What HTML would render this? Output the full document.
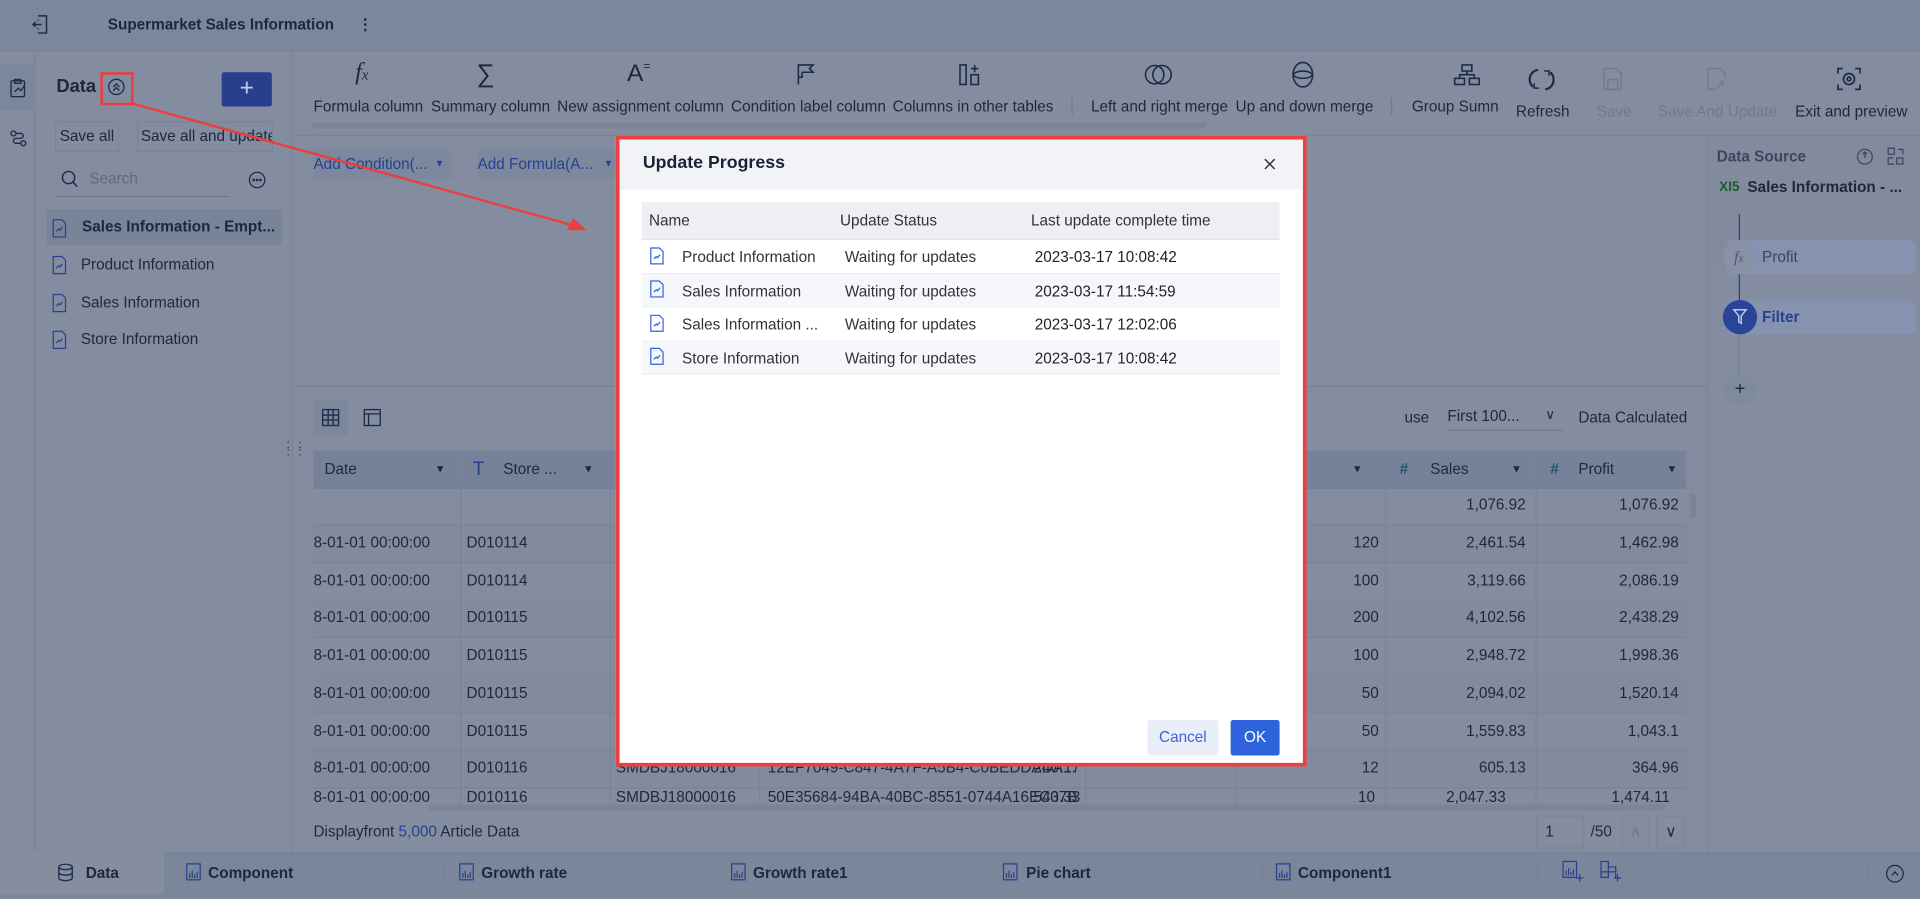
<!DOCTYPE html>
<html><head><meta charset="utf-8"><style>
*{margin:0;padding:0;box-sizing:border-box}
html,body{width:1920px;height:899px;overflow:hidden;background:#858e9f}
#w{position:absolute;left:0;top:0;width:1568px;height:734px;transform:scale(1.224490);transform-origin:0 0;font-family:"Liberation Sans",Arial,sans-serif;font-size:12.5px;color:#1d273d;background:#848d9f}
.a{position:absolute;white-space:nowrap}
svg{position:absolute;overflow:visible}
.dim{color:#6f7a90}
.tc{position:absolute;height:31px;line-height:31px;border-right:1px solid #7a8397}
.row{position:absolute;left:256px;width:1121px;height:31px;border-bottom:1px solid #7a8397}
</style></head><body><div id="w">
<!-- header -->
<div class="a" style="left:0;top:0;width:1568px;height:42px;background:#7c879b;border-bottom:1px solid #76809a"></div>
<svg style="left:26px;top:12px" width="14" height="16" viewBox="0 0 14 16" fill="none" stroke="#1d2a4a" stroke-width="1.2"><path d="M5 1h7v14H5M5 5v-1M5 12v-1M1 8h7M3 6l-2 2 2 2"/></svg>
<div class="a" style="left:88px;top:13px;font-weight:bold;font-size:12.5px">Supermarket Sales Information</div>
<div class="a" style="left:292px;top:12px;font-weight:bold">⋮</div>
<!-- left icon strip -->
<div class="a" style="left:0;top:42px;width:29px;height:654px;border-right:1px solid #7a8398"></div>
<div class="a" style="left:0;top:53px;width:29px;height:37px;background:#7d879b"></div>
<svg style="left:8px;top:64px" width="14" height="16" viewBox="0 0 14 16" fill="none" stroke="#1d2a4a" stroke-width="1.1"><rect x="1" y="2" width="11" height="13" rx="1"/><path d="M4 1h5v3H4zM4 11l3-3 2 2 3-4"/></svg>
<svg style="left:8px;top:106px" width="14" height="14" viewBox="0 0 14 14" fill="none" stroke="#1d2a4a" stroke-width="1.1"><circle cx="3" cy="3" r="2"/><circle cx="11" cy="11" r="2"/><path d="M5 3h4a2 2 0 010 4H5a2 2 0 000 4h4"/></svg>
<!-- left panel -->
<div class="a" style="left:238px;top:42px;width:1px;height:654px;background:#7a8398"></div>
<div class="a" style="left:46px;top:62px;font-weight:bold;font-size:15px">Data</div>
<svg style="left:88px;top:64px" width="14" height="14" viewBox="0 0 14 14" fill="none" stroke="#1d2a4a" stroke-width="1.1"><circle cx="7" cy="7" r="6.2"/><path d="M4.5 7l2.5-2.5L9.5 7M4.5 10l2.5-2.5L9.5 10"/></svg>
<div class="a" style="left:82px;top:59px;width:27px;height:27px;border:2px solid #ee3b3b"></div>
<div class="a" style="left:181px;top:59px;width:41px;height:28px;background:#273f8c;border-radius:2px;color:#c4cde4;font-size:20px;line-height:26px;text-align:center">+</div>
<div class="a" style="left:45px;top:99px;width:52px;height:25px;border:1px solid #7a8398;line-height:23px;text-align:center">Save all</div>
<div class="a" style="left:112px;top:99px;width:111px;height:25px;border:1px solid #7a8398;line-height:23px;overflow:hidden;padding-left:2px">Save all and update</div>
<svg style="left:50px;top:139px" width="14" height="15" viewBox="0 0 14 15" fill="none" stroke="#1d2a4a" stroke-width="1.2"><circle cx="6" cy="6" r="5"/><path d="M9.5 9.5l3.5 4"/></svg>
<div class="a" style="left:73px;top:139px;color:#5d6880">Search</div>
<div class="a" style="left:45px;top:160px;width:143px;height:1px;background:#6f7a90"></div>
<svg style="left:203px;top:140px" width="14" height="14" viewBox="0 0 14 14" fill="none" stroke="#1d2a4a" stroke-width="1"><circle cx="7" cy="7" r="6.3"/><circle cx="4.3" cy="7" r=".6" fill="#1d2a4a"/><circle cx="7" cy="7" r=".6" fill="#1d2a4a"/><circle cx="9.7" cy="7" r=".6" fill="#1d2a4a"/></svg>
<div class="a" style="left:38px;top:171px;width:192px;height:29px;background:#7a8499"></div>
<div class="a" style="left:67px;top:178px;font-weight:bold">Sales Information - Empt...</div>
<div class="a" style="left:66px;top:209px">Product Information</div>
<div class="a" style="left:66px;top:240px">Sales Information</div>
<div class="a" style="left:66px;top:270px">Store Information</div>
<svg style="left:0;top:0" width="1" height="1"><defs><g id="fi" fill="none" stroke="#26418f" stroke-width="1"><path d="M.5.5h7l3 3v11H.5z"/><path d="M3 10l2-2 1 1 2-2.5"/></g></defs></svg>
<svg style="left:43px;top:179px" width="12" height="15"><use href="#fi"/></svg>
<svg style="left:43px;top:209px" width="12" height="15"><use href="#fi"/></svg>
<svg style="left:43px;top:240px" width="12" height="15"><use href="#fi"/></svg>
<svg style="left:43px;top:270px" width="12" height="15"><use href="#fi"/></svg>
<!-- toolbar -->
<div class="a" style="left:240px;top:110px;width:1328px;height:1px;background:#7a8398"></div>
<div class="a" style="left:255px;top:100px;width:730px;height:5px;background:#7b8498;border-radius:3px"></div>
<div class="a" style="left:290px;top:48px;font-family:'Liberation Serif',serif;font-style:italic;font-size:20px">f<span style="font-size:12px">x</span></div>
<div class="a" style="left:389px;top:49px;font-size:21px">∑</div>
<div class="a" style="left:512px;top:49px;font-size:20px">A<span style="font-size:10px;vertical-align:top">=</span></div>
<svg style="left:650px;top:52px" width="16" height="18" viewBox="0 0 16 18" fill="none" stroke="#1d2a4a" stroke-width="1.3"><path d="M2 17V1h12l-3 3 3 3H5M5 7v4H2"/></svg>
<svg style="left:783px;top:52px" width="18" height="18" viewBox="0 0 18 18" fill="none" stroke="#1d2a4a" stroke-width="1.3"><rect x="1" y="1" width="5" height="16"/><rect x="10" y="9" width="6" height="8"/><path d="M13 1v6M10 4h6"/></svg>
<svg style="left:934px;top:52px" width="24" height="18" viewBox="0 0 24 18" fill="none" stroke="#1d2a4a" stroke-width="1.3"><circle cx="9" cy="9" r="7.5"/><circle cx="15" cy="9" r="7.5"/></svg>
<svg style="left:1055px;top:50px" width="18" height="22" viewBox="0 0 18 22" fill="none" stroke="#1d2a4a" stroke-width="1.3"><ellipse cx="9" cy="11" rx="8" ry="10"/><path d="M1 11c3-4 13-4 16 0c-3 4-13 4-16 0"/></svg>
<svg style="left:1187px;top:52px" width="22" height="18" viewBox="0 0 22 18" fill="none" stroke="#1d2a4a" stroke-width="1.3"><rect x="7" y="1" width="8" height="5"/><rect x="1" y="12" width="8" height="5"/><rect x="13" y="12" width="8" height="5"/><path d="M11 6v3M5 12V9h12v3"/></svg>
<svg style="left:1249px;top:54px" width="20" height="22" viewBox="0 0 20 22" fill="none" stroke="#1d2a4a" stroke-width="1.8"><path d="M7 3A8 8 0 003 17M13 19A8 8 0 0017 5"/><path d="M4 14v4h4M16 8V4h-4" stroke-width="1.2"/></svg>
<svg style="left:1309px;top:55px" width="16" height="19" viewBox="0 0 16 19" fill="none" stroke="#6f7a90" stroke-width="1.2"><path d="M1 1h10l4 4v13H1z"/><rect x="4" y="10" width="8" height="8"/></svg>
<svg style="left:1394px;top:55px" width="16" height="19" viewBox="0 0 16 19" fill="none" stroke="#6f7a90" stroke-width="1.2"><path d="M15 9V5l-4-4H1v17h6"/><path d="M9 17l4-5M10 12h3v3"/></svg>
<svg style="left:1500px;top:55px" width="20" height="19" viewBox="0 0 20 19" fill="none" stroke="#1d2a4a" stroke-width="1.4"><path d="M1 5V1h4M15 1h4v4M19 14v4h-4M5 18H1v-4"/><circle cx="10" cy="9.5" r="4.5"/><circle cx="10" cy="9.5" r="1.5"/></svg>
<div class="a" style="left:256px;top:80px">Formula column</div>
<div class="a" style="left:352px;top:80px">Summary column</div>
<div class="a" style="left:455px;top:80px">New assignment column</div>
<div class="a" style="left:597px;top:80px">Condition label column</div>
<div class="a" style="left:729px;top:80px">Columns in other tables</div>
<div class="a" style="left:875px;top:80px;width:1px;height:14px;background:#6f7a90"></div>
<div class="a" style="left:891px;top:80px">Left and right merge</div>
<div class="a" style="left:1009px;top:80px">Up and down merge</div>
<div class="a" style="left:1136px;top:80px;width:1px;height:14px;background:#6f7a90"></div>
<div class="a" style="left:1153px;top:80px">Group Sumn</div>
<div class="a" style="left:1238px;top:84px">Refresh</div>
<div class="a" style="left:1304px;top:84px;color:#6f7a90">Save</div>
<div class="a" style="left:1354px;top:84px;color:#6f7a90">Save And Update</div>
<div class="a" style="left:1466px;top:84px">Exit and preview</div>
<!-- condition row -->
<div class="a" style="left:256px;top:122px;width:113px;height:24px;background:#7d879d;color:#26418f;line-height:24px">Add Condition(...<span style="position:absolute;left:99px;font-size:8px">▼</span></div>
<div class="a" style="left:390px;top:122px;width:114px;height:24px;background:#7d879d;color:#26418f;line-height:24px">Add Formula(A...<span style="position:absolute;left:103px;font-size:8px">▼</span></div>
<div class="a" style="left:240px;top:315px;width:1154px;height:1px;background:#7a8398"></div>
<!-- right panel -->
<div class="a" style="left:1394px;top:110px;width:1px;height:586px;background:#7a8398"></div>
<div class="a" style="left:1395px;top:111px;width:173px;height:105px;background:#828b9d"></div>
<div class="a" style="left:1402px;top:121px;font-weight:bold;color:#3a4560">Data Source</div>
<svg style="left:1516px;top:121px" width="14" height="14" viewBox="0 0 14 14" fill="none" stroke="#3a4560" stroke-width="1"><circle cx="7" cy="7" r="6"/><path d="M7 3v5M5 5l2-2 2 2"/></svg>
<svg style="left:1541px;top:120px" width="14" height="15" viewBox="0 0 14 15" fill="none" stroke="#3a4560" stroke-width="1"><rect x="1" y="1" width="5" height="5"/><rect x="8" y="9" width="5" height="5"/><path d="M9 2h4v4M5 9H1v5h5"/></svg>
<div class="a" style="left:1404px;top:147px;color:#1d5a2a;font-size:11px;font-weight:bold">XI5</div>
<div class="a" style="left:1427px;top:146px;font-weight:bold">Sales Information - ...</div>
<div class="a" style="left:1420px;top:175px;width:1px;height:142px;background:#26418f"></div>
<div class="a" style="left:1420px;top:273px;width:1px;height:40px;background:#7a8398"></div>
<div class="a" style="left:1410px;top:196px;width:155px;height:28px;background:#8593b0;border-radius:6px"></div>
<div class="a" style="left:1407px;top:197px;width:26px;height:26px;border-radius:50%;background:#8891a5;color:#4a5570;font-family:'Liberation Serif',serif;font-style:italic;text-align:center;line-height:26px">f<span style="font-size:9px">x</span></div>
<div class="a" style="left:1439px;top:203px;color:#3a4560">Profit</div>
<div class="a" style="left:1410px;top:245px;width:155px;height:28px;background:#8593b0;border-radius:6px"></div>
<div class="a" style="left:1407px;top:245px;width:28px;height:28px;border-radius:50%;background:#2a4597"></div>
<svg style="left:1415px;top:252px" width="12" height="14" viewBox="0 0 12 14" fill="none" stroke="#c0c9e2" stroke-width="1.2"><path d="M1 1h10L7 6v6l-2-1V6z"/></svg>
<div class="a" style="left:1439px;top:252px;color:#26418f;font-weight:bold">Filter</div>
<div class="a" style="left:1408px;top:305px;width:26px;height:26px;border-radius:50%;background:#808a9d;text-align:center;line-height:26px;font-size:15px">+</div>
<!-- table toolbar -->
<div class="a" style="left:256px;top:327px;width:28px;height:28px;background:#7d879b"></div>
<svg style="left:263px;top:334px" width="14" height="14" viewBox="0 0 14 14" fill="none" stroke="#1d2a4a" stroke-width="1.1"><rect x=".5" y=".5" width="13" height="13"/><path d="M.5 5h13M.5 9h13M5 .5v13M9 .5v13"/></svg>
<svg style="left:297px;top:334px" width="14" height="14" viewBox="0 0 14 14" fill="none" stroke="#1d2a4a" stroke-width="1.1"><rect x=".5" y=".5" width="13" height="13"/><path d="M.5 4h13M4 4v9.5"/></svg>
<div class="a" style="left:234px;top:361px;font-size:10px;line-height:6px;letter-spacing:2px">: :<br>: :</div>
<div class="a" style="left:1147px;top:334px">use</div>
<div class="a" style="left:1182px;top:333px">First 100...</div>
<div class="a" style="left:1262px;top:332px;font-size:11px">∨</div>
<div class="a" style="left:1182px;top:351px;width:94px;height:1px;background:#6f7a90"></div>
<div class="a" style="left:1289px;top:334px">Data Calculated</div>
<!-- table -->
<div class="a" style="left:256px;top:368px;width:1121px;height:31px;background:#77829a;border-bottom:1px solid #6f7a90"></div>
<div class="tc" style="left:256px;top:368px;width:120px;padding-left:9px">Date<span style="position:absolute;left:99px;font-size:9px">▼</span></div>
<div class="tc" style="left:376px;top:368px;width:122px;padding-left:35px">Store ...<span style="position:absolute;left:10px;color:#26418f;font-size:16px">T</span><span style="position:absolute;left:100px;font-size:9px">▼</span></div>
<div class="tc" style="left:1009px;top:368px;width:122px;padding-left:30px;overflow:hidden">ntity<span style="position:absolute;left:95px;font-size:9px">▼</span></div>
<div class="tc" style="left:1131px;top:368px;width:123px;padding-left:37px">Sales<span style="position:absolute;left:12px;color:#1d5a6a;font-weight:bold">#</span><span style="position:absolute;left:103px;font-size:9px">▼</span></div>
<div class="tc" style="left:1254px;top:368px;width:123px;padding-left:35px">Profit<span style="position:absolute;left:12px;color:#1d5a6a;font-weight:bold">#</span><span style="position:absolute;left:107px;font-size:9px">▼</span></div>
<div class="row" style="top:398px"></div><div class="row" style="top:429px;background:#828b9e"></div><div class="row" style="top:460px"></div><div class="row" style="top:490px;background:#828b9e"></div><div class="row" style="top:521px"></div><div class="row" style="top:551px;background:#828b9e"></div><div class="row" style="top:582px"></div><div class="row" style="top:613px;background:#828b9e"></div>
<div class="a" style="left:376px;top:399px;width:1px;height:258px;background:#7a8397"></div>
<div class="a" style="left:498px;top:399px;width:1px;height:258px;background:#7a8397"></div>
<div class="a" style="left:620px;top:399px;width:1px;height:258px;background:#7a8397"></div>
<div class="a" style="left:886px;top:399px;width:1px;height:258px;background:#7a8397"></div>
<div class="a" style="left:1009px;top:399px;width:1px;height:258px;background:#7a8397"></div>
<div class="a" style="left:1131px;top:399px;width:1px;height:258px;background:#7a8397"></div>
<div class="a" style="left:1254px;top:399px;width:1px;height:258px;background:#7a8397"></div>
<div class="a" style="left:1130px;top:405px;width:116px;text-align:right">1,076.92</div>
<div class="a" style="left:1253px;top:405px;width:118px;text-align:right">1,076.92</div>
<div class="a" style="left:1380px;top:403px;width:5px;height:20px;background:#7a8398;border-radius:3px"></div>
<div class="a" style="left:256px;top:428px;line-height:30.7px">8-01-01 00:00:00<br>8-01-01 00:00:00<br>8-01-01 00:00:00<br>8-01-01 00:00:00<br>8-01-01 00:00:00<br>8-01-01 00:00:00<br>8-01-01 00:00:00</div>
<div class="a" style="left:381px;top:428px;line-height:30.7px">D010114<br>D010114<br>D010115<br>D010115<br>D010115<br>D010115<br>D010116</div>
<div class="a" style="left:1010px;top:428px;width:116px;text-align:right;line-height:30.7px">120<br>100<br>200<br>100<br>50<br>50<br>12</div>
<div class="a" style="left:1130px;top:428px;width:116px;text-align:right;line-height:30.7px">2,461.54<br>3,119.66<br>4,102.56<br>2,948.72<br>2,094.02<br>1,559.83<br>605.13</div>
<div class="a" style="left:1253px;top:428px;width:118px;text-align:right;line-height:30.7px">1,462.98<br>2,086.19<br>2,438.29<br>1,998.36<br>1,520.14<br>1,043.1<br>364.96</div>
<div class="a" style="left:503px;top:620px">SMDBJ18000016</div>
<div class="a" style="left:627px;top:620px">12EF7049-C847-4A7F-A5B4-C0BEDDADA...</div>
<div class="a" style="left:844px;top:620px">240.17</div>
<div class="a" style="left:256px;top:645px;line-height:30px;height:12px;overflow:hidden;width:1121px"><span style="position:absolute;left:0;top:-9px">8-01-01 00:00:00</span><span style="position:absolute;left:125px;top:-9px">D010116</span><span style="position:absolute;left:247px;top:-9px">SMDBJ18000016</span><span style="position:absolute;left:371px;top:-9px">50E35684-94BA-40BC-8551-0744A16EC07B</span><span style="position:absolute;left:588px;top:-9px">543.33</span><span style="position:absolute;left:853px;top:-9px">10</span><span style="position:absolute;left:925px;top:-9px">2,047.33</span><span style="position:absolute;left:1060px;top:-9px">1,474.11</span></div>
<div class="a" style="left:350px;top:657px;width:1010px;height:5px;background:#7b8498;border-radius:3px"></div>
<div class="a" style="left:256px;top:672px">Displayfront <span style="color:#26418f">5,000</span> Article Data</div>
<div class="a" style="left:1255px;top:666px;width:39px;height:27px;border:1px solid #7a8398;line-height:25px;padding-left:6px">1</div>
<div class="a" style="left:1299px;top:672px">/50</div>
<div class="a" style="left:1324px;top:666px;width:23px;height:27px;border:1px solid #7e889b;text-align:center;line-height:25px;color:#6f7a90">∧</div>
<div class="a" style="left:1353px;top:666px;width:23px;height:27px;border:1px solid #7a8398;text-align:center;line-height:25px">∨</div>
<!-- bottom tabs -->
<div class="a" style="left:0;top:696px;width:1568px;height:38px;background:#7c869a;border-top:1px solid #76809a"></div>
<div class="a" style="left:0;top:696px;width:134px;height:35px;background:#858e9f;border-radius:0 0 4px 0"></div>
<svg style="left:47px;top:705px" width="13" height="15" viewBox="0 0 13 15" fill="none" stroke="#1d2a4a" stroke-width="1.1"><ellipse cx="6.5" cy="3" rx="5.5" ry="2.2"/><path d="M1 3v9c0 1.2 2.5 2.2 5.5 2.2S12 13.2 12 12V3M1 7.5c0 1.2 2.5 2.2 5.5 2.2S12 8.7 12 7.5"/></svg>
<div class="a" style="left:70px;top:706px;font-weight:bold">Data</div>
<svg style="left:0;top:0" width="1" height="1"><defs><g id="ci" fill="none" stroke="#26418f" stroke-width="1"><rect x=".5" y=".5" width="11" height="13"/><path d="M3 12V8M5 12V6M7 12V9M9 12V7"/></g></defs></svg>
<svg style="left:152px;top:705px" width="12" height="14"><use href="#ci"/></svg><div class="a" style="left:170px;top:706px;font-weight:bold">Component</div>
<div class="a" style="left:362px;top:703px;width:1px;height:20px;background:#76809a"></div>
<svg style="left:375px;top:705px" width="12" height="14"><use href="#ci"/></svg><div class="a" style="left:393px;top:706px;font-weight:bold">Growth rate</div>
<div class="a" style="left:585px;top:703px;width:1px;height:20px;background:#76809a"></div>
<svg style="left:597px;top:705px" width="12" height="14"><use href="#ci"/></svg><div class="a" style="left:615px;top:706px;font-weight:bold">Growth rate1</div>
<div class="a" style="left:808px;top:703px;width:1px;height:20px;background:#76809a"></div>
<svg style="left:819px;top:705px" width="12" height="14"><use href="#ci"/></svg><div class="a" style="left:838px;top:706px;font-weight:bold">Pie chart</div>
<div class="a" style="left:1031px;top:703px;width:1px;height:20px;background:#76809a"></div>
<svg style="left:1042px;top:705px" width="12" height="14"><use href="#ci"/></svg><div class="a" style="left:1060px;top:706px;font-weight:bold">Component1</div>
<div class="a" style="left:1255px;top:703px;width:1px;height:20px;background:#76809a"></div>
<svg style="left:1276px;top:703px" width="18" height="18" viewBox="0 0 18 18" fill="none" stroke="#26418f" stroke-width="1"><rect x=".5" y=".5" width="11" height="13"/><path d="M3 12V8M5 12V6M7 12V9M9 12V7M14 11v6M11 14h6"/></svg>
<svg style="left:1307px;top:703px" width="18" height="18" viewBox="0 0 18 18" fill="none" stroke="#26418f" stroke-width="1"><path d="M.5 .5h6v13H.5zM6.5 5h6v8.5M.5 9h12M14 11v6M11 14h6"/></svg>
<div class="a" style="left:1525px;top:703px;width:1px;height:20px;background:#76809a"></div>
<svg style="left:1540px;top:706px" width="15" height="15" viewBox="0 0 15 15" fill="none" stroke="#1d2a4a" stroke-width="1"><circle cx="7.5" cy="7.5" r="6.8"/><path d="M5 9l2.5-3L10 9"/></svg>
<!-- modal -->
<div class="a" style="left:503px;top:111px;width:564px;height:515px;background:#fff;border:3px solid #ef3e3e"></div>
<div class="a" style="left:506px;top:114px;width:558px;height:41px;background:#f2f3f7"></div>
<div class="a" style="left:525px;top:125px;font-weight:bold;font-size:14.5px;color:#1b2235">Update Progress</div>
<svg style="left:1032px;top:129px" width="10" height="10" viewBox="0 0 10 10" stroke="#333" stroke-width="1.2"><path d="M1 1l8 8M9 1l-8 8"/></svg>
<div class="a" style="left:524px;top:165px;width:521px;height:31px;background:#edeff4;border-bottom:1px solid #dfe2ea"></div>
<div class="a" style="left:530px;top:173px;color:#333">Name</div>
<div class="a" style="left:686px;top:173px;color:#333">Update Status</div>
<div class="a" style="left:842px;top:173px;color:#333">Last update complete time</div>
<div class="a" style="left:524px;top:196px;width:521px;height:109px">
<div style="height:27.5px;border-bottom:1px solid #eceef3"></div>
<div style="height:27.5px;border-bottom:1px solid #eceef3;background:#f6f7fa"></div>
<div style="height:27.5px;border-bottom:1px solid #eceef3"></div>
<div style="height:27.5px;border-bottom:1px solid #eceef3;background:#f6f7fa"></div>
</div>
<svg style="left:0;top:0" width="1" height="1"><defs><g id="mi" fill="none" stroke="#2f63de" stroke-width="1"><path d="M.5.5h7l3 3v10H.5z"/><path d="M3 9.5l2-2 1 1 2-2.5"/></g></defs></svg>
<svg style="left:531px;top:202px" width="12" height="14"><use href="#mi"/></svg>
<svg style="left:531px;top:229px" width="12" height="14"><use href="#mi"/></svg>
<svg style="left:531px;top:257px" width="12" height="14"><use href="#mi"/></svg>
<svg style="left:531px;top:284px" width="12" height="14"><use href="#mi"/></svg>
<div class="a" style="left:557px;top:197px;line-height:27.5px;color:#333">Product Information<br>Sales Information<br>Sales Information ...<br>Store Information</div>
<div class="a" style="left:690px;top:197px;line-height:27.5px;color:#333">Waiting for updates<br>Waiting for updates<br>Waiting for updates<br>Waiting for updates</div>
<div class="a" style="left:845px;top:197px;line-height:27.5px;color:#222">2023-03-17 10:08:42<br>2023-03-17 11:54:59<br>2023-03-17 12:02:06<br>2023-03-17 10:08:42</div>
<div class="a" style="left:937px;top:588px;width:58px;height:29px;background:#e9eef9;color:#3a63d6;text-align:center;line-height:29px;border-radius:2px">Cancel</div>
<div class="a" style="left:1005px;top:588px;width:40px;height:29px;background:#2f63de;color:#fff;text-align:center;line-height:29px;border-radius:2px">OK</div>
<!-- arrow -->
<svg style="left:0;top:0" width="1568" height="734" viewBox="0 0 1568 734"><path d="M106 84L468 184" stroke="#e8403c" stroke-width="2" fill="none"/><path d="M479 188L463 188L468 178Z" fill="#e8403c"/></svg>
</div></body></html>
